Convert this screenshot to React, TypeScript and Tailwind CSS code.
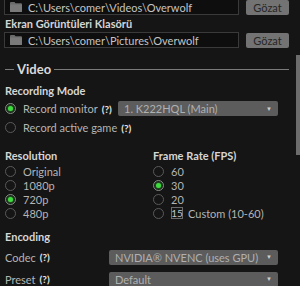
import React from 'react'

const font = { fontFamily: 'Lato, "Noto Sans", sans-serif' }

function Folder() {
    return (
        <svg width="12" height="10" viewBox="0 0 12 10" className="shrink-0">
            <path d="M0 1 Q0 0 1 0 H4.5 L5.5 1.2 H11 Q12 1.2 12 2.2 V9 Q12 10 11 10 H1 Q0 10 0 9 Z" fill="#6b6b6b" />
            <rect x="0" y="2.6" width="12" height="7.4" rx="0.8" fill="#7a7a7a" />
        </svg>
    )
}

function PathRow({ path }: { path: string }) {
    return (
        <div className="flex items-center">
            <div className="flex-1 h-[16px] border border-[#3a3a3a] bg-[#0e0e0e] flex items-center gap-[6px] pl-[5px] overflow-hidden">
                <Folder />
                <span className="text-[11px] text-[#c4c4c4] whitespace-nowrap leading-none">{path}</span>
            </div>
            <button className="ml-[7px] w-[43px] h-[15px] rounded-[2px] bg-[#737373] text-[11px] text-[#262626] leading-none">Gözat</button>
        </div>
    )
}

function Radio({ checked }: { checked?: boolean }) {
    return (
        <span className={`w-[11px] h-[11px] rounded-full border flex items-center justify-center shrink-0 ${checked ? 'border-[#8a8a8a]' : 'border-[#5a5a5a]'}`}>
            {checked && <span className="w-[5px] h-[5px] rounded-full bg-[#3fdc3f] shadow-[0_0_3px_#3fdc3f]" />}
        </span>
    )
}

function Help() {
    return <span className="font-bold text-[#e6e6e6] text-[10px] ml-[4px]">(?)</span>
}

function Select({ label, left }: { label: string; left: string }) {
    return (
        <div className={`absolute ${left} right-[11px] h-[15px] bg-[#5c5c5c] rounded-[2px] flex items-center justify-between px-[6px]`}>
            <span className="text-[11px] text-[#b0b0b0] leading-none whitespace-nowrap">{label}</span>
            <span className="text-[6px] text-[#cfcfcf] leading-none">▼</span>
        </div>
    )
}

function Option({ label, checked }: { label: React.ReactNode; checked?: boolean }) {
    return (
        <div className="h-[14px] flex items-center gap-[7px]">
            <Radio checked={checked} />
            <span className="text-[11px] text-[#b4b4b4] leading-none flex items-center">{label}</span>
        </div>
    )
}

export default function App() {
    return (
        <div className="w-[300px] h-[286px] bg-[#151515] overflow-hidden relative" style={font}>
            {/* scrollbar */}
            <div className="absolute right-0 top-[55px] w-[4px] h-[100px] bg-[#6c6c6c]" />

            <div className="pl-[4px] pr-[11px] -mt-[1px]">
                <PathRow path="C:\Users\comer\Videos\Overwolf" />
                <div className="h-[17px] flex items-center pl-[1px] mt-[0px]">
                    <span className="text-[11px] font-bold text-[#d6d6d6] leading-none">Ekran Görüntüleri Klasörü</span>
                </div>
                <PathRow path="C:\Users\comer\Pictures\Overwolf" />

                {/* Video separator */}
                <div className="flex items-center mt-[13px] h-[16px]">
                    <div className="w-[9px] h-px bg-[#7a7a7a] ml-[1px]" />
                    <span className="text-[13px] font-bold text-[#dadada] px-[3px] leading-none">Video</span>
                    <div className="flex-1 h-px bg-[#7a7a7a]" />
                </div>

                <div className="h-[18px] flex items-center mt-[4px] pl-[1px]">
                    <span className="text-[11px] font-bold text-[#d6d6d6] leading-none">Recording Mode</span>
                </div>

                <div className="relative h-[19px] flex items-center pl-[1px]">
                    <div className="flex items-center gap-[7px]">
                        <Radio checked />
                        <span className="text-[11px] text-[#b4b4b4] leading-none flex items-center">Record monitor<Help /></span>
                    </div>
                    <Select label="1. K222HQL (Main)" left="left-[114px]" />
                </div>
                <div className="h-[19px] flex items-center pl-[1px]">
                    <div className="flex items-center gap-[7px]">
                        <Radio />
                        <span className="text-[11px] text-[#b4b4b4] leading-none flex items-center">Record active game<Help /></span>
                    </div>
                </div>

                <div className="flex mt-[10px] pl-[1px]">
                    <div className="w-[148px]">
                        <div className="h-[17px] flex items-center">
                            <span className="text-[11px] font-bold text-[#d6d6d6] leading-none">Resolution</span>
                        </div>
                        <Option label="Original" />
                        <Option label="1080p" />
                        <Option label="720p" checked />
                        <Option label="480p" />
                    </div>
                    <div>
                        <div className="h-[17px] flex items-center">
                            <span className="text-[11px] font-bold text-[#d6d6d6] leading-none">Frame Rate (FPS)</span>
                        </div>
                        <Option label="60" />
                        <Option label="30" checked />
                        <Option label="20" />
                        <Option
                            label={
                                <>
                                    <span className="w-[12px] h-[12px] border border-[#6a6a6a] text-[10px] text-[#c4c4c4] flex items-center justify-center mr-[5px]">15</span>
                                    Custom (10-60)
                                </>
                            }
                        />
                    </div>
                </div>

                <div className="h-[18px] flex items-center mt-[7px] pl-[1px]">
                    <span className="text-[11px] font-bold text-[#d6d6d6] leading-none">Encoding</span>
                </div>
                <div className="relative h-[22px] flex items-center pl-[1px] mt-[1px]">
                    <span className="text-[11px] text-[#b4b4b4] leading-none flex items-center">Codec<Help /></span>
                    <Select label="NVIDIA® NVENC (uses GPU)" left="left-[105px]" />
                </div>
                <div className="relative h-[22px] flex items-center pl-[1px]">
                    <span className="text-[11px] text-[#b4b4b4] leading-none flex items-center">Preset<Help /></span>
                    <Select label="Default" left="left-[105px]" />
                </div>
            </div>
        </div>
    )
}
